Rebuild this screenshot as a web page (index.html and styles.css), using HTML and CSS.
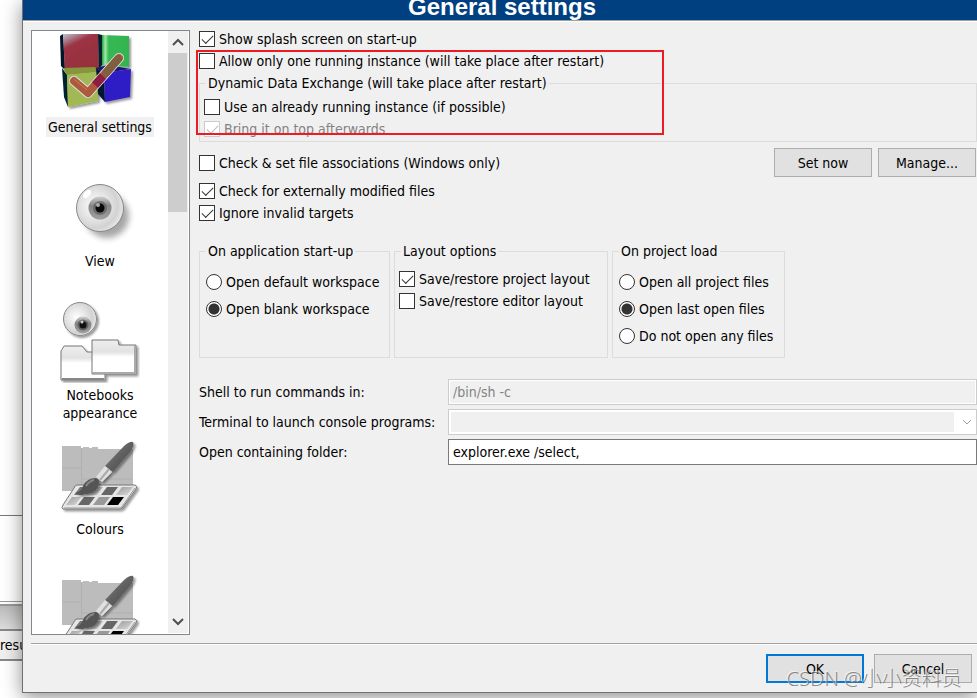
FILE: index.html
```html
<!DOCTYPE html>
<html lang="en">
<head>
  <meta charset="UTF-8" />
  <meta name="viewport" content="width=device-width, initial-scale=1.0"/>
  <title>General settings</title>
  <link rel="stylesheet" href="styles.css">
</head>
<body>

<!-- main window behind the dialog -->
<div class="app">
  <div class="app-editor"></div>
  <div class="app-logs"></div>
  <div class="app-bar"></div>
  <div class="app-tab">resu</div>
</div>

<div class="dialog">
  <header class="banner"><h1>General settings</h1></header>

  <div class="content">
    <aside class="sidebar">
      <nav class="pages">
        <a href="#general" class="page active">
          <svg class="icon" viewBox="0 0 80 84">
            <defs>
              <linearGradient id="red" x1="0" y1="0" x2=".5" y2="1">
                <stop offset="0" stop-color="#b9c8d8"/><stop offset=".35" stop-color="#9c3444"/><stop offset="1" stop-color="#96303c"/>
              </linearGradient>
              <linearGradient id="green" x1="0" y1="0" x2="1" y2="0">
                <stop offset="0" stop-color="#25a040"/><stop offset=".12" stop-color="#a0e8a8"/><stop offset=".25" stop-color="#35b852"/><stop offset="1" stop-color="#33b450"/>
              </linearGradient>
              <filter id="soft" x="-30%" y="-30%" width="170%" height="170%"><feGaussianBlur stdDeviation="3"/></filter>
              <filter id="drop" x="-20%" y="-20%" width="150%" height="150%"><feDropShadow dx="2" dy="2" stdDeviation="1.2" flood-opacity=".4"/></filter>
            </defs>
            <g filter="url(#drop)">
              <path d="M0 5l3-2 2 36-4-4z" fill="#03182c"/>
              <path d="M3 3h35l1 35-34 1z" fill="url(#red)"/>
              <path d="M38 3l4 1v30l-3 4z" fill="#03202e"/>
              <path d="M42 4l27 1v31l-27-2z" fill="url(#green)"/>
              <path d="M2 37l5 7 1 32-4-10z" fill="#03202e"/>
              <path d="M3 37l32-1 3 5-31 3z" fill="#86973a"/>
              <path d="M7 44l31-3v29L8 76z" fill="#a2b854"/>
              <path d="M36 37l8 5 1 29-7-8z" fill="#04162e"/>
              <path d="M36 37l12-3 23 4-27 4z" fill="#1f1672"/>
              <path d="M44 42l27-4-1 28-25 5z" fill="#2f1fc4"/>
            </g>
            <path d="M14 50l14 12 31-35" fill="none" stroke="#dde2ea" stroke-width="10" stroke-linecap="round" stroke-linejoin="round"/>
            <path d="M14 50l14 12 31-35" fill="none" stroke="#ad5a3c" stroke-width="8" stroke-linecap="round" stroke-linejoin="round"/>
            <path d="M35 54l8-9" fill="none" stroke="#8c1c44" stroke-width="8"/>
            <path d="M46 42l12-14" fill="none" stroke="#80603c" stroke-width="8" stroke-linecap="round"/>
            <path d="M14 48l13 11" fill="none" stroke="#d8785c" stroke-width="1"/>
          </svg>
          <span>General settings</span>
        </a>
        <a href="#view" class="page">
          <svg class="icon" viewBox="0 0 80 84">
            <defs>
              <radialGradient id="ball" cx=".4" cy=".45" r=".6">
                <stop offset="0" stop-color="#fff"/><stop offset=".5" stop-color="#e4e4e4"/><stop offset=".8" stop-color="#d2d2d2"/><stop offset="1" stop-color="#e8e8e8"/>
              </radialGradient>
              <linearGradient id="iris" x1="0" y1="0" x2="0" y2="1">
                <stop offset="0" stop-color="#d0d0d0"/><stop offset=".4" stop-color="#858585"/><stop offset="1" stop-color="#a0a0a0"/>
              </linearGradient>
            </defs>
            <circle cx="47" cy="51" r="22" fill="#000" opacity=".35" filter="url(#soft)"/>
            <circle cx="40" cy="43" r="23.5" fill="url(#ball)" stroke="#888"/>
            <circle cx="40" cy="43" r="11.5" fill="url(#iris)"/>
            <circle cx="40" cy="43" r="7" fill="#555" opacity=".6"/>
            <circle cx="40" cy="43" r="4.5" fill="#080808"/>
            <circle cx="38" cy="40" r="2" fill="#aaa"/>
            <ellipse cx="27" cy="29" rx="5" ry="3" fill="#fff" transform="rotate(-45 27 29)"/>
          </svg>
          <span>View</span>
        </a>
        <a href="#notebooks" class="page">
          <svg class="icon" viewBox="0 0 80 84">
            <defs>
              <linearGradient id="folder" x1="0" y1="0" x2="0" y2="1">
                <stop offset="0" stop-color="#eee"/><stop offset=".35" stop-color="#e2e2e2"/><stop offset=".5" stop-color="#fff"/><stop offset="1" stop-color="#fff"/>
              </linearGradient>
            </defs>
            <g filter="url(#drop)">
              <circle cx="20" cy="20" r="16.5" fill="url(#ball)" stroke="#888"/>
              <path d="M1 52l3-5h18l5 6h18v28H1z" fill="url(#folder)" stroke="#777"/>
              <path d="M2 80h42" stroke="#888" stroke-width="2"/>
              <path d="M32 41h26l1 5h17v29H32z" fill="url(#folder)" stroke="#777"/>
              <path d="M33 74h42V47" fill="none" stroke="#aaa" stroke-width="2"/>
            </g>
            <circle cx="23" cy="26" r="8.5" fill="url(#iris)"/>
            <circle cx="23" cy="26" r="5.5" fill="#444" opacity=".6"/>
            <circle cx="23" cy="26" r="3.5" fill="#111"/>
            <circle cx="22" cy="23" r="1.5" fill="#ccc"/>
          </svg>
          <span>Notebooks<br>appearance</span>
        </a>
        <a href="#colours" class="page">
          <svg class="icon" viewBox="0 0 80 84">
            <defs>
              <linearGradient id="handle" x1="0" y1="0" x2="1" y2="1">
                <stop offset="0" stop-color="#8a8a8a"/><stop offset=".5" stop-color="#606060"/><stop offset="1" stop-color="#444"/>
              </linearGradient>
              <linearGradient id="paint" x1="0" y1="0" x2="1" y2="1">
                <stop offset="0" stop-color="#999"/><stop offset="1" stop-color="#ddd"/>
              </linearGradient>
              <g id="palette">
                <path d="M2 13h19v2h2v-1h6v1h3v-1h6v2h35v37H21v5H2z" fill="#bcbcbc"/>
                <path d="M2 35h19M21 46h52M21.500 15v43" stroke="#b0b0b0" fill="none"/>
                <g filter="url(#drop)">
                  <path d="M17 52h58q3 1 1 4L63 74q-1 2-3 2H3q-2-1 0-4l11-17q1-3 3-3z" fill="#e6e6e6" stroke="#777"/>
                </g>
                <path d="M4 75h57L75 55" fill="none" stroke="#999"/>
                <path d="M20 54h9l-6 8h-9z" fill="#777"/>
                <path d="M32 54h11l-6 8H26z" fill="url(#paint)"/>
                <path d="M47 54h11l-6 8H41z" fill="#666"/>
                <path d="M62 54h11l-6 8H56z" fill="url(#paint)"/>
                <path d="M12 64h9l-6 8H6z" fill="url(#paint)"/>
                <path d="M24 64h11l-6 8H18z" fill="#666"/>
                <path d="M39 64h11l-6 8H33z" fill="#999"/>
                <path d="M53 64h11l-6 8H47z" fill="#000"/>
                <g filter="url(#drop)">
                  <path d="M73 9q2 3-3 10L53 39l-8-6 19-20q6-5 9-4z" fill="url(#handle)"/>
                  <path d="M45 33l7 6-10 10-6-5z" fill="#e0e0e0"/>
                  <path d="M49 36l-9 11" stroke="#aaa" stroke-width="2"/>
                  <path d="M36 45q4 1 3 6-2 9-12 10-7 2-12-1 6-1 8-7 4-8 13-8z" fill="#555"/>
                  <path d="M26 53q3-5 8-6" fill="none" stroke="#888" stroke-width="2"/>
                </g>
              </g>
            </defs>
            <use href="#palette"/>
          </svg>
          <span>Colours</span>
        </a>
        <a href="#editor" class="page" aria-label="Editor">
          <svg class="icon" viewBox="0 0 80 84"><use href="#palette"/></svg>
        </a>
      </nav>
      <div class="scrollbar">
        <svg viewBox="0 0 20 22"><path d="M5 14l5-5 5 5" /></svg>
        <div class="thumb"></div>
        <svg viewBox="0 0 20 22"><path d="M5 8l5 5 5-5" /></svg>
      </div>
    </aside>

    <main class="panel">
      <label class="option"><input type="checkbox" checked>Show splash screen on start-up</label>
      <label class="option"><input type="checkbox">Allow only one running instance (will take place after restart)</label>
      <fieldset class="dde">
        <legend>Dynamic Data Exchange (will take place after restart)</legend>
        <label class="option"><input type="checkbox">Use an already running instance (if possible)</label>
        <label class="option disabled"><input type="checkbox" checked disabled>Bring it on top afterwards</label>
      </fieldset>

      <div class="assoc">
        <label class="option"><input type="checkbox">Check &amp; set file associations (Windows only)</label>
        <div class="assoc-buttons">
          <button type="button">Set now</button>
          <button type="button">Manage...</button>
        </div>
      </div>

      <label class="option"><input type="checkbox" checked>Check for externally modified files</label>
      <label class="option"><input type="checkbox" checked>Ignore invalid targets</label>

      <div class="groups">
        <fieldset class="radios">
          <legend>On application start-up</legend>
          <label class="option"><input type="radio" name="startup">Open default workspace</label>
          <label class="option"><input type="radio" name="startup" checked>Open blank workspace</label>
        </fieldset>
        <fieldset>
          <legend>Layout options</legend>
          <label class="option"><input type="checkbox" checked>Save/restore project layout</label>
          <label class="option"><input type="checkbox">Save/restore editor layout</label>
        </fieldset>
        <fieldset class="radios">
          <legend>On project load</legend>
          <label class="option"><input type="radio" name="load">Open all project files</label>
          <label class="option"><input type="radio" name="load" checked>Open last open files</label>
          <label class="option"><input type="radio" name="load">Do not open any files</label>
        </fieldset>
      </div>

      <div class="commands">
        <label for="shell">Shell to run commands in:</label>
        <input type="text" id="shell" value="/bin/sh -c" disabled>
        <label for="terminal">Terminal to launch console programs:</label>
        <div class="combo">
          <select id="terminal" disabled><option></option></select>
          <svg viewBox="0 0 10 6"><path d="M1 1l4 4 4-4"/></svg>
        </div>
        <label for="folder-cmd">Open containing folder:</label>
        <input type="text" id="folder-cmd" value="explorer.exe /select,">
      </div>

      <div class="highlight"></div>
    </main>
  </div>

  <footer class="actions">
    <button type="button" class="default">OK</button>
    <button type="button">Cancel</button>
  </footer>
</div>

<div class="watermark">CSDN @小小资料员</div>

</body>
</html>
```
FILE: styles.css
```css
:root {
  --face: #f0f0f0;
  --line: #dcdcdc;
  --banner: #004080;
  --text: #000;
}

* {
  margin: 0;
  padding: 0;
  box-sizing: border-box;
}

body {
  height: 100vh;
  overflow: hidden;
  position: relative;
  background: #fff;
  color: var(--text);
  font-family: "DejaVu Sans Condensed", "Noto Sans", sans-serif;
  font-size: 14px;
  line-height: 18px;
}

/* window behind */
.app {
  position: absolute;
  top: 0;
  left: 0;
  width: 60px;
  height: 100%;
  display: flex;
  flex-direction: column;
}

.app-editor {
  height: 516px;
  border-bottom: 1px solid #777;
}

.app-logs {
  height: 86px;
  border-bottom: 1px solid #999;
}

.app-bar {
  height: 27px;
  margin-top: 2px;
  border-top: 2px solid #999;
  border-bottom: 2px solid #888;
  background: linear-gradient(#bbb, #ddd);
}

.app-tab {
  height: 30px;
  padding-top: 5px;
  background: #f0f0f0;
  border-bottom: 2px solid #888;
}

.dialog {
  position: relative;
  display: flex;
  flex-direction: column;
  height: calc(100vh - 5px);
  margin-left: 22px;
  background: var(--face);
  border-left: 1px solid #707070;
  border-bottom: 1px solid #707070;
  box-shadow: 0 4px 18px rgba(0, 0, 0, 0.45);
}

.banner {
  height: 22px;
  display: flex;
  align-items: flex-end;
  justify-content: center;
  padding-left: 4px;
  background: var(--banner);
  border-bottom: 1px solid #fff;
  box-shadow: inset 0 -1px #a0a0a0;
}

.banner h1 {
  color: #fff;
  font-family: "Liberation Sans", sans-serif;
  font-size: 24px;
  line-height: 28px;
}

.content {
  flex: 1;
  display: flex;
  gap: 9px;
  min-height: 0;
  padding: 8px 0 8px 8px;
}

/* page list */
.sidebar {
  display: flex;
  width: 159px;
  background: #fff;
  border: 1px solid #828790;
}

.pages {
  flex: 1;
  overflow: hidden;
}

.page {
  display: flex;
  flex-direction: column;
  align-items: center;
  height: 134px;
  color: var(--text);
  text-align: center;
  text-decoration: none;
}

.page span {
  padding: 1px 2px;
  margin-top: 2px;
  white-space: nowrap;
}

.page.active span {
  background: var(--face);
}

.icon {
  width: 80px;
  height: 84px;
  flex: none;
}

.scrollbar {
  display: flex;
  flex-direction: column;
  width: 20px;
  margin: 0 1px 1px 0;
  background: var(--face);
}

.scrollbar svg {
  width: 20px;
  height: 22px;
  fill: none;
  stroke: #505050;
  stroke-width: 2;
}

.scrollbar svg:last-child {
  margin-top: auto;
}

.thumb {
  height: 159px;
  width: 19px;
  background: #cdcdcd;
}

/* settings */
.panel {
  position: relative;
  flex: 1;
  margin-top: -2px;
}

.option {
  display: flex;
  align-items: center;
  gap: 4px;
  height: 22px;
  white-space: nowrap;
}

.option.disabled {
  color: #838383;
}

.option input {
  appearance: none;
  position: relative;
  flex: none;
  width: 16px;
  height: 16px;
  background: #fff;
  border: 1px solid #333;
}

.option input[type="checkbox"]:checked::after {
  content: "";
  position: absolute;
  top: 3px;
  left: 2px;
  width: 10px;
  height: 5px;
  border: solid #333;
  border-width: 0 0 1px 1px;
  transform: rotate(-45deg);
}

.option input:disabled {
  border-color: #ccc;
}

.option input[type="checkbox"]:disabled::after {
  border-color: #bbb;
}

.option input[type="radio"] {
  border-radius: 50%;
}

.option input[type="radio"]:checked {
  background: radial-gradient(circle, #333 5px, #fff 6px);
}

fieldset {
  min-width: 0;
  padding: 7px 4px 0;
  border: 1px solid var(--line);
}

legend {
  margin-left: 2px;
  padding: 0 2px;
  line-height: 20px;
}

.dde {
  margin-top: 1px;
  padding: 3px 4px 1px;
}

.assoc {
  display: flex;
  align-items: center;
  justify-content: space-between;
  margin: 6px 1px 3px 0;
}

.assoc-buttons {
  display: flex;
  gap: 6px;
}

button {
  width: 98px;
  height: 29px;
  background: #e1e1e1;
  border: 1px solid #adadad;
  color: var(--text);
  font: inherit;
}

button.default {
  border: 2px solid #0078d7;
}

.groups {
  display: grid;
  grid-template-columns: 191px 214px 173px;
  gap: 4px;
  height: 117px;
  margin-top: 17px;
}

.radios {
  padding: 7px 6px 0;
}

.radios legend {
  margin-left: 0;
}

.radios .option {
  height: 27px;
}

.commands {
  display: grid;
  grid-template-columns: 249px 1fr;
  grid-auto-rows: 26px;
  row-gap: 4px;
  align-items: center;
  margin-top: 21px;
}

.commands label {
  white-space: nowrap;
}

.commands input {
  width: 100%;
  height: 26px;
  padding: 0 4px;
  background: #fff;
  border: 1px solid #7a7a7a;
  color: var(--text);
  font: inherit;
}

.commands input:disabled {
  background: var(--face);
  border-color: #ccc;
  box-shadow: inset 0 0 0 1px #fff;
  color: #838383;
}

.combo {
  position: relative;
}

.combo select {
  display: block;
  appearance: none;
  width: 100%;
  height: 26px;
  background: linear-gradient(var(--face), var(--face)) 2px 2px / calc(100% - 24px) 20px no-repeat #fff;
  border: 1px solid #ccc;
  font: inherit;
  opacity: 1;
}

.combo svg {
  position: absolute;
  top: 10px;
  right: 5px;
  width: 10px;
  height: 6px;
  fill: none;
  stroke: #a0a0a0;
}

/* marked area */
.highlight {
  position: absolute;
  top: 22px;
  left: -3px;
  width: 468px;
  height: 85px;
  border: 2px solid #ed1c24;
  pointer-events: none;
}

.actions {
  display: flex;
  justify-content: flex-end;
  gap: 10px;
  margin-left: 8px;
  padding: 10px 5px 9px 0;
  border-top: 1px solid #a0a0a0;
  box-shadow: inset 0 1px #fff;
}

.watermark {
  position: absolute;
  right: 15px;
  bottom: 5px;
  color: rgba(110, 110, 110, 0.8);
  font-family: "Noto Sans", "Noto Sans CJK SC", sans-serif;
  font-size: 20px;
  font-weight: 300;
  line-height: 28px;
  text-shadow: -1px -1px rgba(255, 255, 255, 0.6);
}
```
